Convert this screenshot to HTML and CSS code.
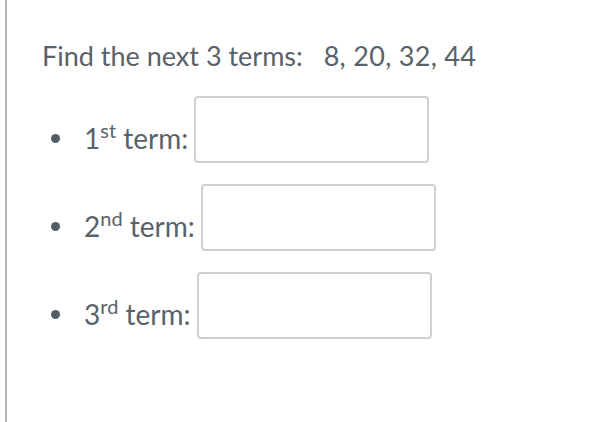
FILE: index.html
```html
<!DOCTYPE html>
<html>
<head>
<meta charset="utf-8">
<link rel="stylesheet" href="styles.css">
</head>
<body>
<div class="frame">
  <p class="question">Find the next 3 terms:&nbsp; <span class="seq">8, 20, 32, 44</span></p>
  <ul class="terms">
    <li class="term"><span class="dot"></span><span class="label">1<sup>st</sup> term:</span><span class="box"></span></li>
    <li class="term"><span class="dot"></span><span class="label">2<sup>nd</sup> term:</span><span class="box"></span></li>
    <li class="term"><span class="dot"></span><span class="label">3<sup>rd</sup> term:</span><span class="box"></span></li>
  </ul>
</div>
</body>
</html>
```
FILE: styles.css
```css
html, body {
  margin: 0;
  padding: 0;
  background: #ffffff;
}
body {
  font-family: Lato, "Open Sans", sans-serif;
  color: #59616a;
}
.frame {
  margin-left: 5px;
  border-left: 2px solid #b3b3b3;
  height: 422px;
  box-sizing: border-box;
  padding-left: 35px;
  padding-top: 38px;
}
.question {
  margin: 0;
  font-size: 27px;
  line-height: 36px;
}
.seq {
  margin-left: 7px;
  letter-spacing: 0.3px;
}
.terms {
  list-style: none;
  margin: 22px 0 0 0;
  padding: 0;
  display: flex;
  flex-direction: column;
  gap: 21px;
}
.term {
  display: flex;
  align-items: flex-end;
  height: 67px;
}
.dot {
  width: 9px;
  height: 9px;
  border-radius: 50%;
  background: #555d64;
  margin-left: 9px;
  margin-right: 24px;
  margin-bottom: 20px;
  flex: none;
}
.label {
  font-size: 28px;
  line-height: 30px;
  padding-bottom: 10px;
  margin-right: 6px;
  white-space: nowrap;
}
.label sup {
  font-size: 20px;
  line-height: 0;
  vertical-align: 11px;
}
.box {
  flex: none;
  width: 235px;
  height: 67px;
  box-sizing: border-box;
  border: 2px solid #cfcfcf;
  border-radius: 4px;
  background: #fff;
}
```
